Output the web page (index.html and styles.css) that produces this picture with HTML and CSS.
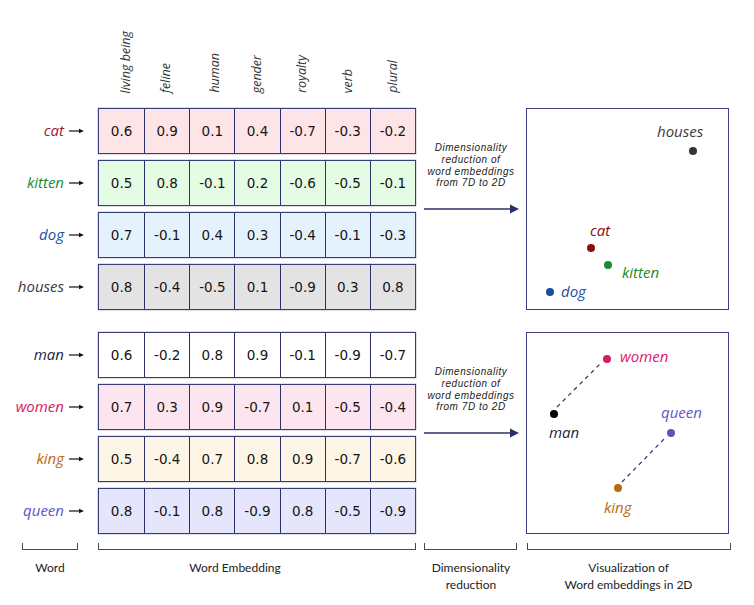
FILE: index.html
```html
<!DOCTYPE html>
<html>
<head>
<meta charset="utf-8">
<link rel="stylesheet" href="styles.css">
</head>
<body>
<div class="diagram">
  <div class="band header">
    <div></div>
    <div class="dims">
      <div class="dim"><span>living being</span></div>
      <div class="dim"><span>feline</span></div>
      <div class="dim"><span>human</span></div>
      <div class="dim"><span>gender</span></div>
      <div class="dim"><span>royalty</span></div>
      <div class="dim"><span>verb</span></div>
      <div class="dim"><span>plural</span></div>
    </div>
  </div>

  <div class="band group">
    <div class="words">
      <div class="word c-cat"><span>cat</span><svg class="arr" width="15" height="8" viewBox="0 0 15 8"><line x1="0" y1="4" x2="11" y2="4" stroke="#111" stroke-width="1.2"/><polygon points="15,4 10,1.8 10,6.2" fill="#111"/></svg></div>
      <div class="word c-kitten"><span>kitten</span><svg class="arr" width="15" height="8" viewBox="0 0 15 8"><line x1="0" y1="4" x2="11" y2="4" stroke="#111" stroke-width="1.2"/><polygon points="15,4 10,1.8 10,6.2" fill="#111"/></svg></div>
      <div class="word c-dog"><span>dog</span><svg class="arr" width="15" height="8" viewBox="0 0 15 8"><line x1="0" y1="4" x2="11" y2="4" stroke="#111" stroke-width="1.2"/><polygon points="15,4 10,1.8 10,6.2" fill="#111"/></svg></div>
      <div class="word c-houses"><span>houses</span><svg class="arr" width="15" height="8" viewBox="0 0 15 8"><line x1="0" y1="4" x2="11" y2="4" stroke="#111" stroke-width="1.2"/><polygon points="15,4 10,1.8 10,6.2" fill="#111"/></svg></div>
    </div>
    <div class="rows">
      <div class="vec bg-cat"><div>0.6</div><div>0.9</div><div>0.1</div><div>0.4</div><div>-0.7</div><div>-0.3</div><div>-0.2</div></div>
      <div class="vec bg-kitten"><div>0.5</div><div>0.8</div><div>-0.1</div><div>0.2</div><div>-0.6</div><div>-0.5</div><div>-0.1</div></div>
      <div class="vec bg-dog"><div>0.7</div><div>-0.1</div><div>0.4</div><div>0.3</div><div>-0.4</div><div>-0.1</div><div>-0.3</div></div>
      <div class="vec bg-houses"><div>0.8</div><div>-0.4</div><div>-0.5</div><div>0.1</div><div>-0.9</div><div>0.3</div><div>0.8</div></div>
    </div>
    <div class="reduce">
      <p class="caption">Dimensionality<br>reduction of<br>word embeddings<br>from 7D to 2D</p>
      <svg class="bigarrow" width="110" height="10" viewBox="0 0 110 10"><line x1="8" y1="5" x2="96" y2="5" stroke="#2b2f6b" stroke-width="1.3"/><polygon points="103,5 94,0.5 94,9.5" fill="#2b2f6b"/></svg>
      <div></div>
    </div>
    <div class="plot">
      <span class="dot d-houses" style="left:162px;top:38px"></span>
      <span class="pl c-houses" style="left:130px;top:13px">houses</span>
      <span class="dot d-cat" style="left:60px;top:135px"></span>
      <span class="pl c-catv" style="left:63px;top:112px">cat</span>
      <span class="dot d-kitten" style="left:77px;top:152px"></span>
      <span class="pl c-kitten" style="left:95px;top:154px">kitten</span>
      <span class="dot d-dog" style="left:19px;top:179px"></span>
      <span class="pl c-dog" style="left:34px;top:173px">dog</span>
    </div>
  </div>

  <div class="band group second">
    <div class="words">
      <div class="word c-man"><span>man</span><svg class="arr" width="15" height="8" viewBox="0 0 15 8"><line x1="0" y1="4" x2="11" y2="4" stroke="#111" stroke-width="1.2"/><polygon points="15,4 10,1.8 10,6.2" fill="#111"/></svg></div>
      <div class="word c-women"><span>women</span><svg class="arr" width="15" height="8" viewBox="0 0 15 8"><line x1="0" y1="4" x2="11" y2="4" stroke="#111" stroke-width="1.2"/><polygon points="15,4 10,1.8 10,6.2" fill="#111"/></svg></div>
      <div class="word c-king"><span>king</span><svg class="arr" width="15" height="8" viewBox="0 0 15 8"><line x1="0" y1="4" x2="11" y2="4" stroke="#111" stroke-width="1.2"/><polygon points="15,4 10,1.8 10,6.2" fill="#111"/></svg></div>
      <div class="word c-queen"><span>queen</span><svg class="arr" width="15" height="8" viewBox="0 0 15 8"><line x1="0" y1="4" x2="11" y2="4" stroke="#111" stroke-width="1.2"/><polygon points="15,4 10,1.8 10,6.2" fill="#111"/></svg></div>
    </div>
    <div class="rows">
      <div class="vec bg-man"><div>0.6</div><div>-0.2</div><div>0.8</div><div>0.9</div><div>-0.1</div><div>-0.9</div><div>-0.7</div></div>
      <div class="vec bg-women"><div>0.7</div><div>0.3</div><div>0.9</div><div>-0.7</div><div>0.1</div><div>-0.5</div><div>-0.4</div></div>
      <div class="vec bg-king"><div>0.5</div><div>-0.4</div><div>0.7</div><div>0.8</div><div>0.9</div><div>-0.7</div><div>-0.6</div></div>
      <div class="vec bg-queen"><div>0.8</div><div>-0.1</div><div>0.8</div><div>-0.9</div><div>0.8</div><div>-0.5</div><div>-0.9</div></div>
    </div>
    <div class="reduce">
      <p class="caption">Dimensionality<br>reduction of<br>word embeddings<br>from 7D to 2D</p>
      <svg class="bigarrow" width="110" height="10" viewBox="0 0 110 10"><line x1="8" y1="5" x2="96" y2="5" stroke="#2b2f6b" stroke-width="1.3"/><polygon points="103,5 94,0.5 94,9.5" fill="#2b2f6b"/></svg>
      <div></div>
    </div>
    <div class="plot">
      <svg class="links" width="203" height="202" viewBox="0 0 203 202"><line x1="31" y1="75" x2="76" y2="30" stroke="#2b2f6b" stroke-width="1.2" stroke-dasharray="4 4"/><line x1="96" y1="150" x2="140" y2="105" stroke="#2b2f6b" stroke-width="1.2" stroke-dasharray="4 4"/></svg>
      <span class="dot d-women" style="left:76px;top:22px"></span>
      <span class="pl c-women" style="left:93px;top:14px">women</span>
      <span class="dot d-man" style="left:23px;top:77px"></span>
      <span class="pl c-man" style="left:22px;top:90px">man</span>
      <span class="dot d-queen" style="left:140px;top:96px"></span>
      <span class="pl c-queen" style="left:134px;top:70px">queen</span>
      <span class="dot d-king" style="left:87px;top:151px"></span>
      <span class="pl c-king" style="left:77px;top:165px">king</span>
    </div>
  </div>

  <div class="band brackets">
    <div class="br br-word"></div>
    <div class="br br-emb"></div>
    <div class="br br-red"></div>
    <div class="br br-viz"></div>
  </div>
  <div class="band legend">
    <div class="lg">Word</div>
    <div class="lg lg-emb">Word Embedding</div>
    <div class="lg">Dimensionality<br>reduction</div>
    <div class="lg lg-viz">Visualization of<br>Word embeddings in 2D</div>
  </div>
</div>
</body>
</html>
```

FILE: styles.css
```css
html, body {
  margin: 0;
  padding: 0;
  background: #ffffff;
}

.diagram {
  width: 754px;
  display: flex;
  flex-direction: column;
}

.band {
  display: grid;
  grid-template-columns: 98px 318px 110px 203px;
}

/* header with rotated dimension names */
.header {
  height: 108px;
}
.dims {
  display: grid;
  grid-template-columns: repeat(7, 1fr);
  padding-bottom: 15px;
}
.dim {
  display: flex;
  justify-content: center;
  align-items: flex-end;
}
.dim span {
  writing-mode: vertical-rl;
  transform: rotate(180deg);
  font-family: "Open Sans", sans-serif;
  font-style: italic;
  font-size: 12.5px;
  line-height: 14px;
  color: #333;
  white-space: nowrap;
}
.dim:first-child {
  padding-left: 10px;
}
.dim:nth-child(3) {
  padding-left: 6px;
}

/* groups */
.group {
  height: 202px;
}
.second {
  margin-top: 22px;
}

.words {
  display: flex;
  flex-direction: column;
  gap: 6px;
}
.word {
  height: 46px;
  display: flex;
  align-items: center;
  justify-content: flex-end;
  padding-right: 14px;
  font-family: "Open Sans", sans-serif;
  font-style: italic;
  font-size: 15px;
}
.word span {
  margin-top: -2px;
}
.word .arr {
  margin-left: 5px;
  flex: none;
}

.rows {
  display: flex;
  flex-direction: column;
  gap: 6px;
}
.vec {
  height: 46px;
  box-sizing: border-box;
  border: 1px solid #3a3e78;
  box-shadow: 0 0 0 0.5px rgba(120, 120, 160, 0.5);
  display: grid;
  grid-template-columns: repeat(7, 1fr);
}
.vec div {
  display: flex;
  align-items: center;
  justify-content: center;
  border-left: 1px solid #2c306a;
  font-family: "DejaVu Sans", sans-serif;
  font-size: 13.5px;
  color: #141414;
}
.vec div:first-child {
  border-left: none;
}

.bg-cat { background: #fde4e7; }
.bg-kitten { background: #e4fbe4; }
.bg-dog { background: #e4f2fd; }
.bg-houses { background: #e3e3e3; }
.bg-man { background: #ffffff; }
.bg-women { background: #fde5f0; }
.bg-king { background: #fdf5e6; }
.bg-queen { background: #e5e5fb; }

.c-cat { color: #a3172c; }
.c-catv { color: #8b0d0d; }
.c-kitten { color: #1d8a30; }
.c-dog { color: #1c4f9c; }
.c-houses { color: #3a3a3a; }
.c-man { color: #1d1f3c; }
.c-women { color: #dc1566; }
.c-king { color: #c0680c; }
.c-queen { color: #5f55c6; }

/* dimensionality reduction arrow */
.reduce {
  display: grid;
  grid-template-rows: 1fr auto 1fr;
}
.caption {
  align-self: end;
  margin: 0 0 15px 0;
  text-align: center;
  font-family: "Liberation Sans", sans-serif;
  font-style: italic;
  font-size: 10px;
  letter-spacing: 0.55px;
  line-height: 11.7px;
  color: #222;
}
.bigarrow {
  display: block;
}

/* plots */
.plot {
  position: relative;
  box-sizing: border-box;
  border: 1px solid #3d4180;
  background: #fff;
}
.dot {
  position: absolute;
  width: 8px;
  height: 8px;
  border-radius: 50%;
}
.d-houses { background: #333; }
.d-cat { background: #8b0f12; }
.d-kitten { background: #1b8a30; }
.d-dog { background: #174f98; }
.d-man { background: #000; }
.d-women { background: #d81b63; }
.d-queen { background: #5c52c2; }
.d-king { background: #b96a14; }

.pl {
  position: absolute;
  font-family: "Open Sans", sans-serif;
  font-style: italic;
  font-size: 15px;
  line-height: 18px;
  white-space: nowrap;
}
.links {
  position: absolute;
  left: -1px;
  top: -1px;
}

/* brackets */
.brackets {
  margin-top: 9px;
}
.br {
  height: 6px;
  border: 1px solid #4a4a4a;
  border-top: none;
}
.br-word {
  margin-left: 22px;
  margin-right: 20px;
}
.br-red {
  margin-left: 8px;
  margin-right: 9px;
}
.br-viz {
  margin-left: 1px;
  margin-right: -2px;
}

.legend {
  margin-top: 9px;
}
.lg {
  text-align: center;
  font-family: "Lato", sans-serif;
  font-size: 12px;
  line-height: 17px;
  color: #222;
}
.lg:first-child {
  padding-left: 2px;
}
.lg-emb {
  padding-right: 44px;
}
.lg-viz {
  padding-left: 2px;
}
```
